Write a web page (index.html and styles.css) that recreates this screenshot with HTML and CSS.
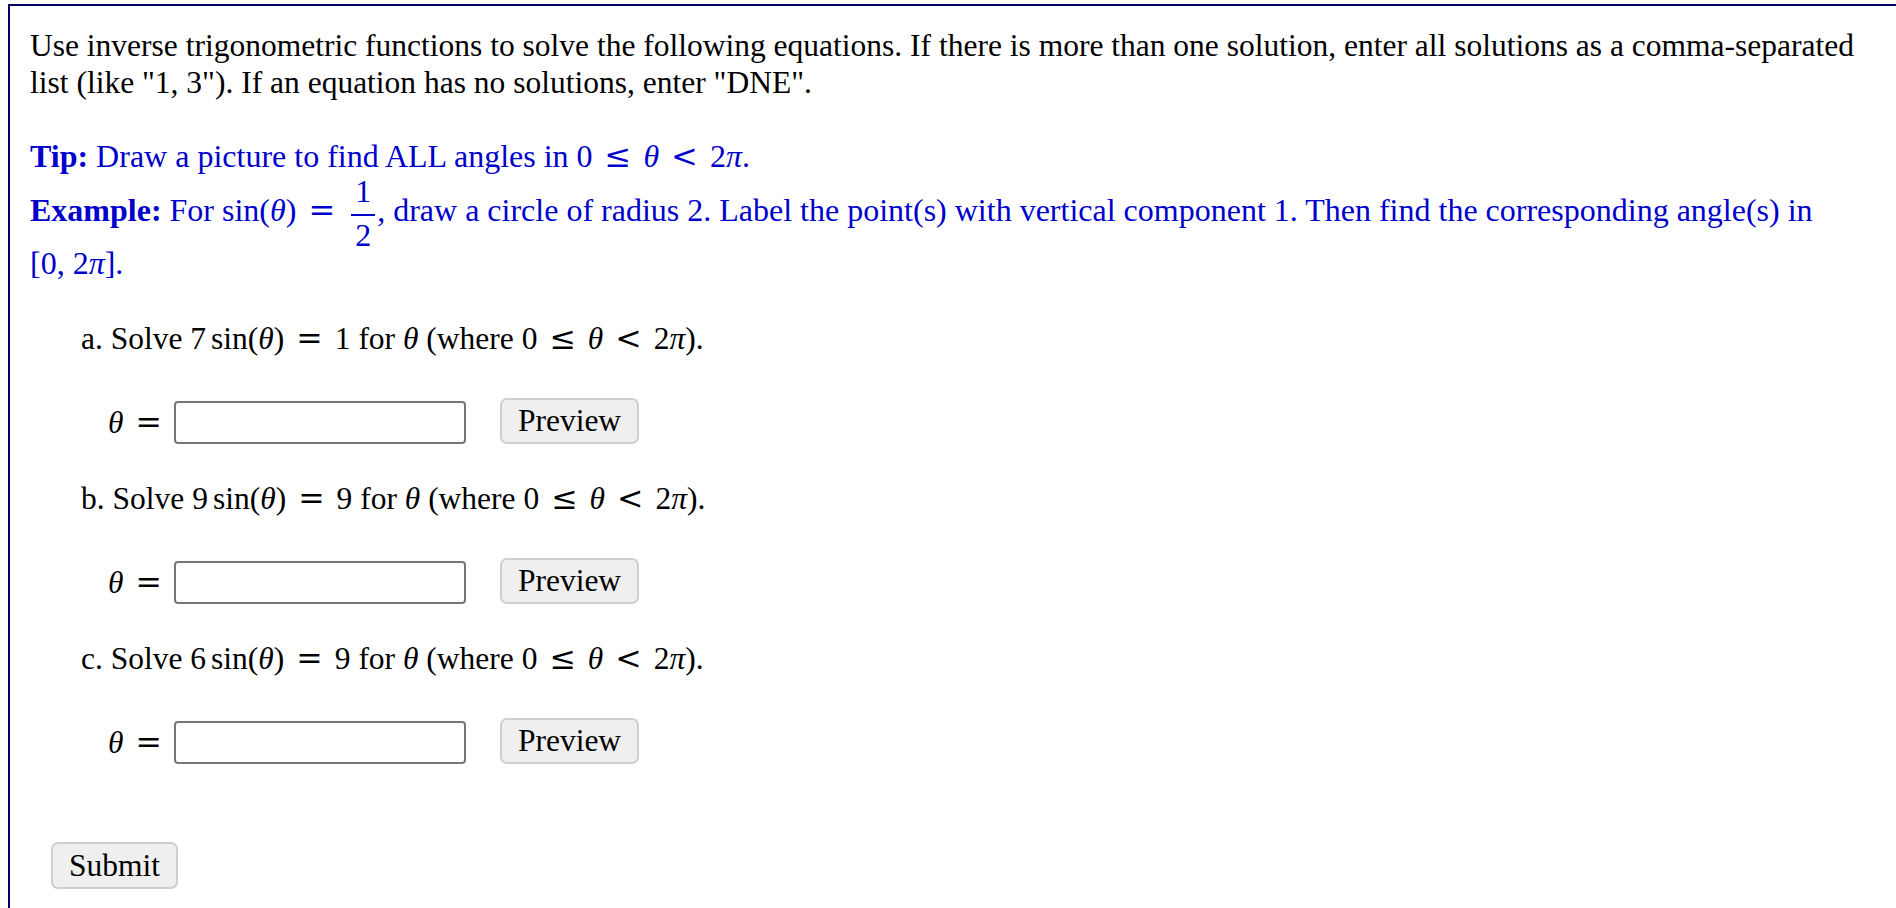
FILE: index.html
```html
<!DOCTYPE html>
<html lang="en">
<head>
  <meta charset="UTF-8">
  <meta name="viewport" content="width=device-width, initial-scale=1.0">
  <title>Inverse trig equations</title>
  <link rel="stylesheet" href="styles.css">
</head>
<body>

<div class="problem">
  <p class="intro">Use inverse trigonometric functions to solve the following equations. If there is more than one solution, enter all solutions as a comma-separated list (like "1, 3"). If an equation has no solutions, enter "DNE".</p>

  <p class="hint"><b>Tip:</b> Draw a picture to find ALL angles in <span class="m">0<span class="op">≤</span><i>θ</i><span class="op">&lt;</span>2<i>π</i></span>.<br>
  <b>Example:</b> For <span class="m">sin(<i>θ</i>)<span class="op">=</span><span class="frac"><span class="num">1</span><span class="den">2</span></span></span>, draw a circle of radius 2. Label the point(s) with vertical component 1. Then find the corresponding angle(s) in <span class="m">[0, 2<i>π</i>]</span>.</p>

  <div class="part">a. Solve <span class="m">7<span class="th"></span>sin(<i>θ</i>)<span class="op">=</span>1</span> for <span class="m"><i>θ</i></span> (where <span class="m">0<span class="op">≤</span><i>θ</i><span class="op">&lt;</span>2<i>π</i></span>).</div>
  <div class="answer">
    <span class="m lhs"><i>θ</i><span class="op">=</span></span>
    <input type="text" class="ans">
    <button class="btn preview">Preview</button>
  </div>

  <div class="part">b. Solve <span class="m">9<span class="th"></span>sin(<i>θ</i>)<span class="op">=</span>9</span> for <span class="m"><i>θ</i></span> (where <span class="m">0<span class="op">≤</span><i>θ</i><span class="op">&lt;</span>2<i>π</i></span>).</div>
  <div class="answer">
    <span class="m lhs"><i>θ</i><span class="op">=</span></span>
    <input type="text" class="ans">
    <button class="btn preview">Preview</button>
  </div>

  <div class="part">c. Solve <span class="m">6<span class="th"></span>sin(<i>θ</i>)<span class="op">=</span>9</span> for <span class="m"><i>θ</i></span> (where <span class="m">0<span class="op">≤</span><i>θ</i><span class="op">&lt;</span>2<i>π</i></span>).</div>
  <div class="answer">
    <span class="m lhs"><i>θ</i><span class="op">=</span></span>
    <input type="text" class="ans">
    <button class="btn preview">Preview</button>
  </div>

  <button class="btn submit">Submit</button>
</div>

</body>
</html>
```

FILE: styles.css
```css
html, body {
  margin: 0;
  overflow: hidden;
  background-color: #fff;
}

body {
  font-family: "Liberation Serif", "Times New Roman", serif;
  font-size: 31.5px;
  line-height: 37px;
  color: #000;
}

.problem {
  margin: 4px 0 0 8px;
  border-top: 2px solid #00005e;
  border-left: 2px solid #00005e;
  padding: 21px 36px 0 20px;
  min-height: 100vh;
}

.intro {
  margin: 0 0 37px 0;
}

.hint {
  margin: 0 0 38px 0;
  font-size: 32px;
  color: #0000cc;
}

/* math bits */
.m {
  white-space: nowrap;
}

.m i {
  font-style: italic;
}

.op {
  font-family: "DejaVu Serif", serif;
  margin: 0 12px;
}

.th {
  display: inline-block;
  width: 5px;
}

.frac {
  display: inline-block;
  vertical-align: -25px;
  text-align: center;
  margin: 0 2px 0 4px;
}

.num {
  display: block;
  line-height: 1;
  padding: 0 4px 7px 4px;
}

.den {
  display: block;
  line-height: 1;
  height: 26px;
  padding-top: 3px;
  border-top: 2px solid #0000cc;
}

/* parts */
.part {
  margin: 0 0 41px 51px;
}

.answer {
  display: flex;
  align-items: flex-start;
  margin: 0 0 36px 78px;
  height: 46px;
}

.lhs {
  align-self: center;
  margin-top: 3px;
}

.lhs .op {
  margin-right: 10px;
}

.ans {
  box-sizing: border-box;
  width: 292px;
  height: 43px;
  margin: 3px 0 0 2px;
  border: 2px solid #767676;
  border-radius: 4px;
  background: #fff;
  font-size: 24px;
}

.btn {
  box-sizing: border-box;
  font-family: "Liberation Serif", "Times New Roman", serif;
  font-size: 31.5px;
  color: #000;
  background-color: #efefef;
  border: 2px solid #cfcfcf;
  border-radius: 7px;
  padding: 0 16px;
  cursor: pointer;
}

.preview {
  height: 46px;
  margin-left: 34px;
}

.submit {
  display: block;
  height: 47px;
  margin: 78px 0 0 21px;
}
```
